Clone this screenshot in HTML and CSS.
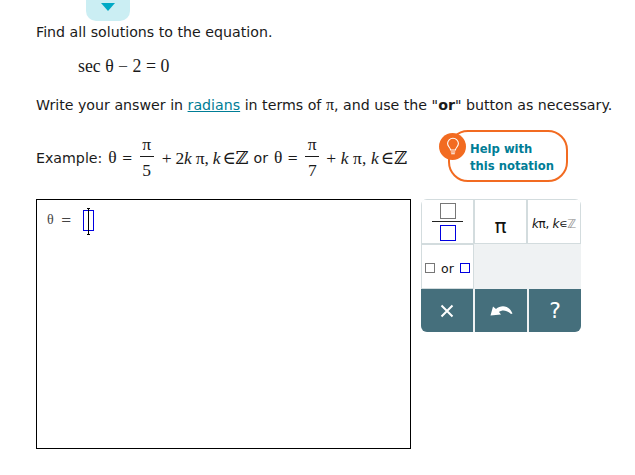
FILE: index.html
```html
<!DOCTYPE html>
<html lang="en">
<head>
    <meta charset="UTF-8">
    <title>Question</title>
    <link rel="stylesheet" href="styles.css">
</head>
<body>
    <div class="tab"><span class="tab-arrow"></span></div>
    <div class="question">
        <p class="prompt">Find all solutions to the equation.</p>
        <p class="equation math">sec θ − 2 = 0</p>
        <p class="instructions">Write your answer in <a href="#">radians</a> in terms of <span class="math">π</span>, and use the "<b>or</b>" button as necessary.</p>

        <div class="example-row">
            <div class="example">
                <span>Example:</span>
                <span class="math theta">θ</span>
                <span class="equals">=</span>
                <span class="frac math"><span class="num">π</span><span class="den">5</span></span>
                <span class="math term">+ 2<i>k</i> π, <i>k</i><span class="set">∈ℤ</span></span>
                <span>or</span>
                <span class="math theta">θ</span>
                <span class="equals">=</span>
                <span class="frac math"><span class="num">π</span><span class="den">7</span></span>
                <span class="math term term-last">+ <i>k</i> π, <i>k</i><span class="set">∈ℤ</span></span>
            </div>
            <a class="help" href="#">
                <span class="help-icon">
                    <svg width="18" height="20" viewBox="0 0 18 20" fill="none" stroke="#fff" stroke-width="1.1">
                        <path d="M6.6 13 C6.4 10.6 3.6 9.6 3.6 6.6 A5.4 5.4 0 0 1 14.4 6.6 C14.4 9.6 11.6 10.6 11.4 13 Z"/>
                        <path d="M6.8 15 H11.2 M7.2 16.8 H10.8"/>
                    </svg>
                </span>
                Help with<br>this notation
            </a>
        </div>

        <div class="answer-row">
            <div class="work-area">
                <span class="math answer-theta">θ</span>
                <span class="answer-equals">=</span>
                <span class="cursor-box"></span>
            </div>
            <div class="keypad">
                <button class="key key-frac"><span class="sq grey big"></span><span class="bar"></span><span class="sq blue big"></span></button>
                <button class="key key-pi math">π</button>
                <button class="key key-set math"><span><i>k</i>π, <i>k</i>∊<span class="pale">ℤ</span></span></button>
                <button class="key key-or"><span class="sq grey"></span><span>or</span><span class="sq blue"></span></button>
                <div class="key-blank"></div>
                <div class="dark-row">
                    <button class="key dark">
                        <svg width="14" height="14" viewBox="0 0 14 14" stroke="#fff" stroke-width="2"><path d="M1.5 1.5 L12.5 12.5 M12.5 1.5 L1.5 12.5"/></svg>
                    </button>
                    <button class="key dark">
                        <svg width="23" height="13" viewBox="0 0 23 13" fill="#fff"><path d="M0.5 11.5 L3 2.5 L6 5 C11 0.5 19 1 22.5 9.5 L21 10 C17 6 12 5.5 9 8 L11 10.5 Z"/></svg>
                    </button>
                    <button class="key dark key-q">?</button>
                </div>
            </div>
        </div>
    </div>
</body>
</html>
```
FILE: styles.css
```css
* { box-sizing: border-box; }
body {
    margin: 0;
    background: #fff;
    color: #1a1a1a;
    font-family: "DejaVu Sans", Verdana, sans-serif;
    font-size: 14.2px;
    overflow: hidden;
}
.math { font-family: "Liberation Serif", "DejaVu Serif", serif; }
p { margin: 0; }

/* top tab */
.tab {
    width: 44px;
    height: 21px;
    margin-left: 86px;
    background: #cbeef3;
    border-radius: 0 0 10px 10px;
    display: flex;
    justify-content: center;
    padding-top: 3px;
}
.tab-arrow {
    width: 0;
    height: 0;
    border-left: 7px solid transparent;
    border-right: 7px solid transparent;
    border-top: 8px solid #00a9c5;
}

.question { padding: 3px 0 0 36px; }
.prompt { line-height: 17px; }
.equation {
    font-size: 17.8px;
    line-height: 20px;
    margin: 15px 0 0 42px;
}
.instructions {
    line-height: 17px;
    margin-top: 20px;
    white-space: nowrap;
}
.instructions .math { font-size: 16px; }
.instructions a { color: #007d96; }

/* example line */
.example-row {
    display: flex;
    align-items: center;
    height: 52px;
    margin-top: 16px;
}
.example {
    display: flex;
    align-items: center;
    width: 403px;
    padding-top: 3px;
    white-space: nowrap;
}
.theta { font-size: 17.5px; margin-left: 6px; }
.equals { margin: 0 5px; font-size: 13px; }
.frac {
    display: inline-flex;
    flex-direction: column;
    align-items: center;
    width: 14px;
    margin-left: 2px;
    font-size: 17.5px;
}
.num { border-bottom: 1px solid #1a1a1a; width: 100%; text-align: center; line-height: 24px; }
.den { line-height: 27px; }
.term { font-size: 17.5px; margin: 0 5px 0 8px; letter-spacing: -0.2px; }
.term-last { letter-spacing: 0.1px; margin-left: 7px; }
.set { font-size: 18px; margin-left: 2px; }

/* help button */
.help {
    position: relative;
    display: block;
    width: 120px;
    height: 52px;
    margin-left: 9px;
    padding: 9px 0 0 20px;
    border: 2px solid #f26b21;
    border-radius: 20px;
    color: #007d96;
    font-weight: bold;
    font-size: 11.6px;
    line-height: 17px;
    text-decoration: none;
}
.help-icon {
    position: absolute;
    left: -11px;
    top: 1px;
    width: 27px;
    height: 27px;
    border-radius: 50%;
    background: #f26b21;
    display: flex;
    align-items: center;
    justify-content: center;
}

/* answer area */
.answer-row {
    display: flex;
    align-items: flex-start;
    gap: 10px;
    margin-top: 17px;
}
.work-area {
    width: 375px;
    height: 250px;
    border: 1px solid #000;
    padding: 7px 0 0 10px;
    display: flex;
    align-items: flex-start;
    color: #444;
}
.answer-theta { font-size: 14px; line-height: 26px; }
.answer-equals { font-size: 13px; line-height: 26px; margin-left: 7px; }
.cursor-box {
    position: relative;
    width: 11px;
    height: 21px;
    margin: 3px 0 0 11px;
    border: 1px solid #0000e0;
}
.cursor-box::after {
    content: "";
    position: absolute;
    left: 3px;
    top: -3px;
    width: 3px;
    height: 25px;
    border: solid #000;
    border-width: 1px 0;
    background: linear-gradient(#000, #000) center / 1px 100% no-repeat;
}

/* keypad */
.keypad {
    display: grid;
    grid-template-columns: 53px 53px 54px;
    grid-template-rows: 45px 45px 43px;
    width: 160px;
    border-radius: 6px;
    overflow: hidden;
    background: #eff2f3;
}
.key {
    margin: 0;
    padding: 0;
    background: #fff;
    border: 1px solid #d3dcde;
    color: #111;
    display: flex;
    align-items: center;
    justify-content: center;
    font-family: inherit;
}
.key-frac { flex-direction: column; gap: 2px; padding-top: 1px; }
.key-frac .bar { margin-bottom: 1px; }
.key-pi { font-size: 20px; padding-top: 8px; }
.key-set { font-size: 12px; white-space: nowrap; letter-spacing: -0.3px; padding-top: 5px; }
.key-set .pale { color: #888; }
.key-or { grid-column: 1; gap: 6px; font-size: 12.5px; padding-top: 3px; }
.key-blank { grid-column: 2 / 4; }
.sq { display: block; width: 10px; height: 10px; border: 1px solid #777; }
.sq.blue { border-color: #0000e0; }
.sq.big { width: 16px; height: 16px; }
.bar { display: block; width: 31px; height: 1px; background: #222; }
.dark-row {
    grid-column: 1 / 4;
    display: flex;
    gap: 2px;
}
.dark { flex: 1; background: #456f7c; border: none; }
.key-q { color: #fff; font-size: 22px; }
```
